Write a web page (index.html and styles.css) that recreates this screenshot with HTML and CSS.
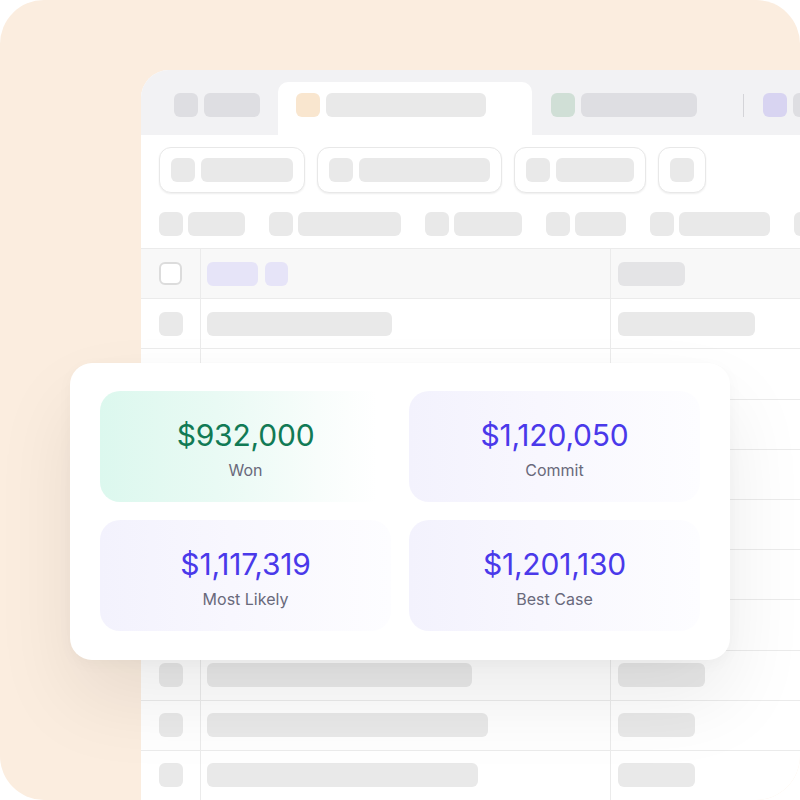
FILE: index.html
```html
<!DOCTYPE html>
<html lang="en">
<head>
<meta charset="utf-8">
<title>Forecast summary</title>
<link rel="stylesheet" href="styles.css">
</head>
<body>
<div class="frame">
  <div class="window">
    <div class="tabbar">
      <div class="tab">
        <span class="sk ic tg"></span><span class="sk tg" style="width:56px"></span>
      </div>
      <div class="tab active">
        <span class="sk ic peach"></span><span class="sk" style="width:160px"></span>
      </div>
      <div class="tab t3">
        <span class="sk ic green"></span><span class="sk tg" style="width:116px"></span>
      </div>
      <span class="tab-sep"></span>
      <div class="tab t4">
        <span class="sk ic purple"></span><span class="sk tg" style="width:60px"></span>
      </div>
    </div>

    <div class="filters">
      <div class="pill"><span class="sk ic"></span><span class="sk" style="width:92px"></span></div>
      <div class="pill"><span class="sk ic"></span><span class="sk" style="width:131px"></span></div>
      <div class="pill"><span class="sk ic"></span><span class="sk" style="width:78px"></span></div>
      <div class="pill"><span class="sk ic"></span></div>
    </div>

    <div class="cols">
      <div class="col-chip"><span class="sk ic"></span><span class="sk" style="width:57px"></span></div>
      <div class="col-chip"><span class="sk ic"></span><span class="sk" style="width:103px"></span></div>
      <div class="col-chip"><span class="sk ic"></span><span class="sk" style="width:68px"></span></div>
      <div class="col-chip"><span class="sk ic"></span><span class="sk" style="width:51px"></span></div>
      <div class="col-chip"><span class="sk ic"></span><span class="sk" style="width:91px"></span></div>
      <div class="col-chip"><span class="sk ic"></span><span class="sk" style="width:60px"></span></div>
    </div>

    <div class="table">
      <div class="row head">
        <div class="cell c1"><span class="checkbox"></span></div>
        <div class="cell c2"><span class="sk lav" style="width:51px"></span><span class="sk lav" style="width:23px"></span></div>
        <div class="cell c3"><span class="sk hg" style="width:67px"></span></div>
      </div>
      <div class="row">
        <div class="cell c1"><span class="sk ic"></span></div>
        <div class="cell c2"><span class="sk" style="width:185px"></span></div>
        <div class="cell c3"><span class="sk" style="width:137px"></span></div>
      </div>
      <div class="row"><div class="cell c1"></div><div class="cell c2"></div><div class="cell c3"></div></div>
      <div class="row"><div class="cell c1"></div><div class="cell c2"></div><div class="cell c3"></div></div>
      <div class="row"><div class="cell c1"></div><div class="cell c2"></div><div class="cell c3"></div></div>
      <div class="row"><div class="cell c1"></div><div class="cell c2"></div><div class="cell c3"></div></div>
      <div class="row"><div class="cell c1"></div><div class="cell c2"></div><div class="cell c3"></div></div>
      <div class="row"><div class="cell c1"></div><div class="cell c2"></div><div class="cell c3"></div></div>
      <div class="row">
        <div class="cell c1"><span class="sk ic"></span></div>
        <div class="cell c2"><span class="sk" style="width:265px"></span></div>
        <div class="cell c3"><span class="sk" style="width:87px"></span></div>
      </div>
      <div class="row">
        <div class="cell c1"><span class="sk ic"></span></div>
        <div class="cell c2"><span class="sk" style="width:281px"></span></div>
        <div class="cell c3"><span class="sk" style="width:77px"></span></div>
      </div>
      <div class="row">
        <div class="cell c1"><span class="sk ic"></span></div>
        <div class="cell c2"><span class="sk" style="width:271px"></span></div>
        <div class="cell c3"><span class="sk" style="width:77px"></span></div>
      </div>
    </div>
  </div>

  <div class="summary">
    <div class="tile won">
      <div class="value">$932,000</div>
      <div class="label">Won</div>
    </div>
    <div class="tile">
      <div class="value">$1,120,050</div>
      <div class="label">Commit</div>
    </div>
    <div class="tile">
      <div class="value">$1,117,319</div>
      <div class="label">Most Likely</div>
    </div>
    <div class="tile">
      <div class="value">$1,201,130</div>
      <div class="label">Best Case</div>
    </div>
  </div>
</div>
</body>
</html>
```

FILE: styles.css
```css
* { box-sizing: border-box; }

html, body {
  margin: 0;
  padding: 0;
  background: #ffffff;
  font-family: "Inter", "Noto Sans", sans-serif;
}

.frame {
  position: relative;
  width: 800px;
  height: 800px;
  overflow: hidden;
  border-radius: 44px;
  background: #fbeddf;
  padding: 70px 0 0 141px;
}

.window {
  width: 700px;
  height: 760px;
  background: #ffffff;
  border-radius: 28px 0 0 0;
  overflow: hidden;
}

/* skeleton blocks */
.sk {
  display: block;
  flex: none;
  height: 24px;
  border-radius: 6px;
  background: #e9e9e9;
}
.sk.ic { width: 24px; }
.sk.tg { background: #dedee2; }
.sk.peach { background: #f9e6cf; }
.sk.green { background: #d0dfd6; }
.sk.purple { background: #d8d4f1; }
.sk.lav { background: #e6e4f8; }
.sk.hg { background: #e4e4e6; }

/* tab bar */
.tabbar {
  display: flex;
  align-items: flex-end;
  height: 65px;
  padding-left: 15px;
  background: #f2f2f4;
}
.tab {
  display: flex;
  flex: none;
  gap: 6px;
  height: 53px;
  padding: 11px 18px 18px;
}
.tab.active {
  width: 254px;
  background: #ffffff;
  border-radius: 10px 10px 0 0;
}
.tab.t3 { padding-left: 19px; padding-right: 46px; }
.tab.t4 { padding-left: 19px; }
.tab-sep {
  flex: none;
  width: 1px;
  height: 23px;
  margin-bottom: 18px;
  background: #d4d4d8;
}

/* filter pills */
.filters {
  display: flex;
  gap: 12px;
  padding: 12px 18px 0;
}
.pill {
  display: flex;
  flex: none;
  align-items: center;
  gap: 6px;
  height: 46px;
  padding: 0 11px;
  border: 1px solid #e8e8e8;
  border-radius: 12px;
  background: #ffffff;
  box-shadow: 0 1px 2px rgba(0, 0, 0, 0.07);
}

/* column chips */
.cols {
  display: flex;
  gap: 24px;
  padding: 0 18px;
  margin: 19px 0 12px;
}
.col-chip {
  display: flex;
  flex: none;
  gap: 5px;
}

/* table */
.row {
  display: grid;
  grid-template-columns: 60px 410px 1fr;
  height: 50.2px;
  border-top: 1px solid #ebebeb;
}
.row.head { background: #f8f8f8; }
.cell {
  display: flex;
  align-items: center;
  gap: 7px;
}
.c1 { padding-left: 18px; border-right: 1px solid #ebebeb; }
.c2 { padding-left: 6px; border-right: 1px solid #ebebeb; }
.c3 { padding-left: 7px; }

.checkbox {
  display: block;
  width: 23px;
  height: 23px;
  border: 2px solid #dcdcdc;
  border-radius: 6px;
  background: #ffffff;
}

/* summary card */
.summary {
  position: absolute;
  left: 70px;
  top: 363px;
  width: 660px;
  height: 297px;
  padding: 28px 30px 29px;
  display: grid;
  grid-template-columns: 1fr 1fr;
  grid-template-rows: 1fr 1fr;
  gap: 18px;
  background: #ffffff;
  border-radius: 22px;
  box-shadow: 0 40px 80px rgba(0, 0, 0, 0.08), 0 4px 16px rgba(0, 0, 0, 0.03);
}
.tile {
  display: flex;
  flex-direction: column;
  align-items: center;
  justify-content: center;
  gap: 7px;
  border-radius: 20px;
  background: linear-gradient(90deg, #f3f2fd 0%, #f8f7fe 45%, #fdfdff 100%);
  padding-top: 4px;
}
.tile.won {
  background: linear-gradient(90deg, #dcf8ee 0%, #e9faf4 40%, #f8fdfb 75%, #ffffff 95%);
}
.value {
  font-size: 30px;
  line-height: 36px;
  font-weight: 400;
  color: #4a39ea;
  letter-spacing: -0.2px;
}
.won .value { color: #117a55; }
.label {
  font-size: 16px;
  line-height: 20px;
  color: #69697b;
}
```
